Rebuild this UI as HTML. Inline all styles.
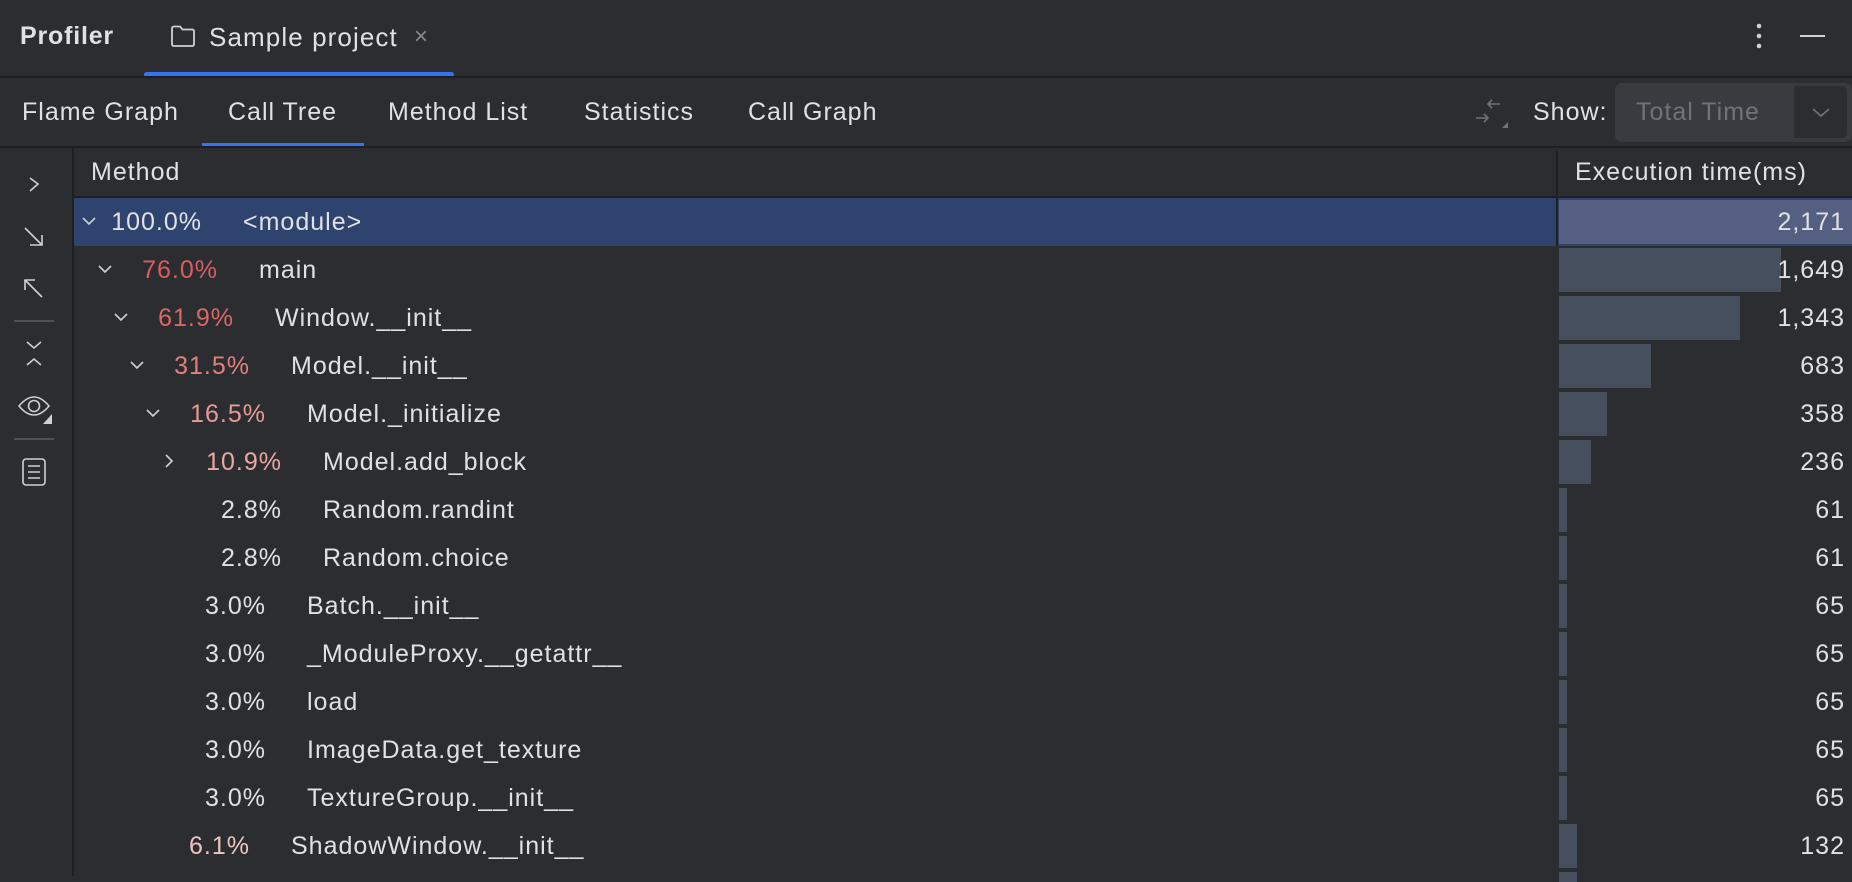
<!DOCTYPE html>
<html><head><meta charset="utf-8"><style>
*{margin:0;padding:0;box-sizing:border-box}
body{width:1852px;height:876px;background:#2b2d30;color:#dfe1e5;font-family:"Liberation Sans",sans-serif;font-size:25px;letter-spacing:1px;position:relative;overflow:hidden}
.a{position:absolute;white-space:nowrap}
.row{position:absolute;left:74px;width:1778px;height:48px}
</style></head><body>
<!-- top bar -->
<div class="a" style="left:20px;top:22px;font-weight:bold;font-size:25px;letter-spacing:0.8px">Profiler</div>
<svg class="a" style="left:170px;top:24px" width="26" height="24" viewBox="0 0 26 24"><path d="M2 4.5 Q2 2.5 4 2.5 H10 L12.5 5.5 H22 Q24 5.5 24 7.5 V20 Q24 22 22 22 H4 Q2 22 2 20 Z" fill="none" stroke="#ced0d6" stroke-width="1.8"/></svg>
<div class="a" style="left:209px;top:22px;font-size:26px;letter-spacing:1.1px">Sample project</div>
<div class="a" style="left:414px;top:23px;font-size:24px;color:#868a91">×</div>
<div class="a" style="left:144px;top:72px;width:310px;height:5px;border-radius:3px;background:#3574f0"></div>
<div class="a" style="left:0;top:76px;width:1852px;height:2px;background:#1e1f22"></div>
<svg class="a" style="left:1752px;top:22px" width="14" height="30"><circle cx="7" cy="4" r="2.3" fill="#ced0d6"/><circle cx="7" cy="14" r="2.3" fill="#ced0d6"/><circle cx="7" cy="24" r="2.3" fill="#ced0d6"/></svg>
<div class="a" style="left:1800px;top:35px;width:25px;height:2px;background:#ced0d6"></div>
<!-- tabs -->
<div class="a" style="left:22px;top:98px">Flame Graph</div>
<div class="a" style="left:228px;top:98px">Call Tree</div>
<div class="a" style="left:388px;top:98px">Method List</div>
<div class="a" style="left:584px;top:98px">Statistics</div>
<div class="a" style="left:748px;top:98px">Call Graph</div>
<div class="a" style="left:202px;top:143px;width:162px;height:4px;background:#3574f0"></div>
<div class="a" style="left:0;top:146px;width:1852px;height:2px;background:#1e1f22"></div>
<svg class="a" style="left:1474px;top:96px" width="38" height="34"><path d="M14 8 H26 M18 4 L14 8 L18 12 M2 22 H14 M10 18 L14 22 L10 26" stroke="#6f737a" stroke-width="1.6" fill="none"/><path d="M34 26 V32 H28 Z" fill="#6f737a"/></svg>
<div class="a" style="left:1533px;top:98px">Show:</div>
<div class="a" style="left:1615px;top:83px;width:237px;height:59px;border-radius:7px;border:2px solid #393b40;background:#393b40"></div>
<div class="a" style="left:1794px;top:86px;width:53px;height:52px;background:#2b2d30;border-radius:0 5px 5px 0"></div>
<div class="a" style="left:1636px;top:98px;color:#6f737a">Total Time</div>
<svg class="a" style="left:1810px;top:106px" width="22" height="14"><path d="M3 3 L11 10 L19 3" stroke="#6f737a" stroke-width="1.6" fill="none"/></svg>
<!-- left toolbar -->
<div class="a" style="left:72px;top:148px;width:2px;height:728px;background:#1e1f22"></div>
<svg class="a" style="left:0;top:150px" width="72" height="340" fill="none" stroke="#ced0d6" stroke-width="1.6">
<path d="M30 28 L38 34 L30 41"/>
<path d="M25 78 L42 95 M42 85 V95 H30"/>
<path d="M42 147 L25 130 M25 140 V130 H35"/>
<path d="M14 171 H54" stroke="#4e5157" stroke-width="2"/>
<path d="M27 192 L34 198 L41 192 M27 215 L34 209 L41 215"/>
<path d="M19 256 Q34 238 49 256 Q34 274 19 256 Z"/><circle cx="34" cy="256" r="5.5"/>
<path d="M52 264 V274 H43 Z" fill="#ced0d6" stroke="none"/>
<path d="M14 289 H54" stroke="#4e5157" stroke-width="2"/>
<rect x="23" y="309" width="22" height="26" rx="3"/><path d="M28 316 H40 M28 322 H40 M28 328 H40"/>
</svg>
<!-- header -->
<div class="a" style="left:91px;top:158px">Method</div>
<div class="a" style="left:1556px;top:151px;width:2px;height:44px;background:#1e1f22"></div>
<div class="a" style="left:1575px;top:158px">Execution time(ms)</div>
<div class="a" style="left:74px;top:196px;width:1778px;height:2px;background:#1e1f22"></div>
<!-- rows -->
<div class="row" style="top:198px;background:#2e436e"></div>
<div class="a" style="left:1559px;top:200px;width:293px;height:44px;background:#545f82"></div>
<div class="a" style="left:1556px;top:198px;width:2px;height:48px;background:#1e1f22"></div>
<div style="position:absolute;left:0;top:0;width:1852px;height:876px">
<svg class="a" style="left:81px;top:216px" width="16" height="12"><path d="M2 2 L8 8 L14 2" stroke="#ced0d6" stroke-width="1.6" fill="none"/></svg>
<div class="a" style="left:82px;top:208px;width:120px;text-align:right">100.0%</div>
<div class="a" style="left:243px;top:208px">&lt;module&gt;</div>
<div class="a" style="right:7px;top:208px">2,171</div>

<svg class="a" style="left:97px;top:264px" width="16" height="12"><path d="M2 2 L8 8 L14 2" stroke="#ced0d6" stroke-width="1.6" fill="none"/></svg>
<div class="a" style="left:98px;top:256px;width:120px;text-align:right;color:#db5c5c">76.0%</div>
<div class="a" style="left:259px;top:256px">main</div>
<div class="a" style="left:1559px;top:248px;width:222px;height:44px;background:#454f5e"></div>
<div class="a" style="right:7px;top:256px">1,649</div>

<svg class="a" style="left:113px;top:312px" width="16" height="12"><path d="M2 2 L8 8 L14 2" stroke="#ced0d6" stroke-width="1.6" fill="none"/></svg>
<div class="a" style="left:114px;top:304px;width:120px;text-align:right;color:#dc6763">61.9%</div>
<div class="a" style="left:275px;top:304px">Window.__init__</div>
<div class="a" style="left:1559px;top:296px;width:181px;height:44px;background:#454f5e"></div>
<div class="a" style="right:7px;top:304px">1,343</div>

<svg class="a" style="left:129px;top:360px" width="16" height="12"><path d="M2 2 L8 8 L14 2" stroke="#ced0d6" stroke-width="1.6" fill="none"/></svg>
<div class="a" style="left:130px;top:352px;width:120px;text-align:right;color:#e27f7a">31.5%</div>
<div class="a" style="left:291px;top:352px">Model.__init__</div>
<div class="a" style="left:1559px;top:344px;width:92px;height:44px;background:#454f5e"></div>
<div class="a" style="right:7px;top:352px">683</div>

<svg class="a" style="left:145px;top:408px" width="16" height="12"><path d="M2 2 L8 8 L14 2" stroke="#ced0d6" stroke-width="1.6" fill="none"/></svg>
<div class="a" style="left:146px;top:400px;width:120px;text-align:right;color:#e89a95">16.5%</div>
<div class="a" style="left:307px;top:400px">Model._initialize</div>
<div class="a" style="left:1559px;top:392px;width:48px;height:44px;background:#454f5e"></div>
<div class="a" style="right:7px;top:400px">358</div>

<svg class="a" style="left:163px;top:453px" width="12" height="16"><path d="M3 2 L9 8 L3 14" stroke="#ced0d6" stroke-width="1.6" fill="none"/></svg>
<div class="a" style="left:162px;top:448px;width:120px;text-align:right;color:#eaa7a2">10.9%</div>
<div class="a" style="left:323px;top:448px">Model.add_block</div>
<div class="a" style="left:1559px;top:440px;width:32px;height:44px;background:#454f5e"></div>
<div class="a" style="right:7px;top:448px">236</div>

<div class="a" style="left:162px;top:496px;width:120px;text-align:right">2.8%</div>
<div class="a" style="left:323px;top:496px">Random.randint</div>
<div class="a" style="left:1559px;top:488px;width:8px;height:44px;background:#454f5e"></div>
<div class="a" style="right:7px;top:496px">61</div>

<div class="a" style="left:162px;top:544px;width:120px;text-align:right">2.8%</div>
<div class="a" style="left:323px;top:544px">Random.choice</div>
<div class="a" style="left:1559px;top:536px;width:8px;height:44px;background:#454f5e"></div>
<div class="a" style="right:7px;top:544px">61</div>

<div class="a" style="left:146px;top:592px;width:120px;text-align:right">3.0%</div>
<div class="a" style="left:307px;top:592px">Batch.__init__</div>
<div class="a" style="left:1559px;top:584px;width:8px;height:44px;background:#454f5e"></div>
<div class="a" style="right:7px;top:592px">65</div>

<div class="a" style="left:146px;top:640px;width:120px;text-align:right">3.0%</div>
<div class="a" style="left:307px;top:640px">_ModuleProxy.__getattr__</div>
<div class="a" style="left:1559px;top:632px;width:8px;height:44px;background:#454f5e"></div>
<div class="a" style="right:7px;top:640px">65</div>

<div class="a" style="left:146px;top:688px;width:120px;text-align:right">3.0%</div>
<div class="a" style="left:307px;top:688px">load</div>
<div class="a" style="left:1559px;top:680px;width:8px;height:44px;background:#454f5e"></div>
<div class="a" style="right:7px;top:688px">65</div>

<div class="a" style="left:146px;top:736px;width:120px;text-align:right">3.0%</div>
<div class="a" style="left:307px;top:736px">ImageData.get_texture</div>
<div class="a" style="left:1559px;top:728px;width:8px;height:44px;background:#454f5e"></div>
<div class="a" style="right:7px;top:736px">65</div>

<div class="a" style="left:146px;top:784px;width:120px;text-align:right">3.0%</div>
<div class="a" style="left:307px;top:784px">TextureGroup.__init__</div>
<div class="a" style="left:1559px;top:776px;width:8px;height:44px;background:#454f5e"></div>
<div class="a" style="right:7px;top:784px">65</div>

<div class="a" style="left:130px;top:832px;width:120px;text-align:right;color:#efc4c0">6.1%</div>
<div class="a" style="left:291px;top:832px">ShadowWindow.__init__</div>
<div class="a" style="left:1559px;top:824px;width:18px;height:44px;background:#454f5e"></div>
<div class="a" style="right:7px;top:832px">132</div>

<div class="a" style="left:1559px;top:872px;width:18px;height:10px;background:#454f5e"></div>
</div>
</body></html>
